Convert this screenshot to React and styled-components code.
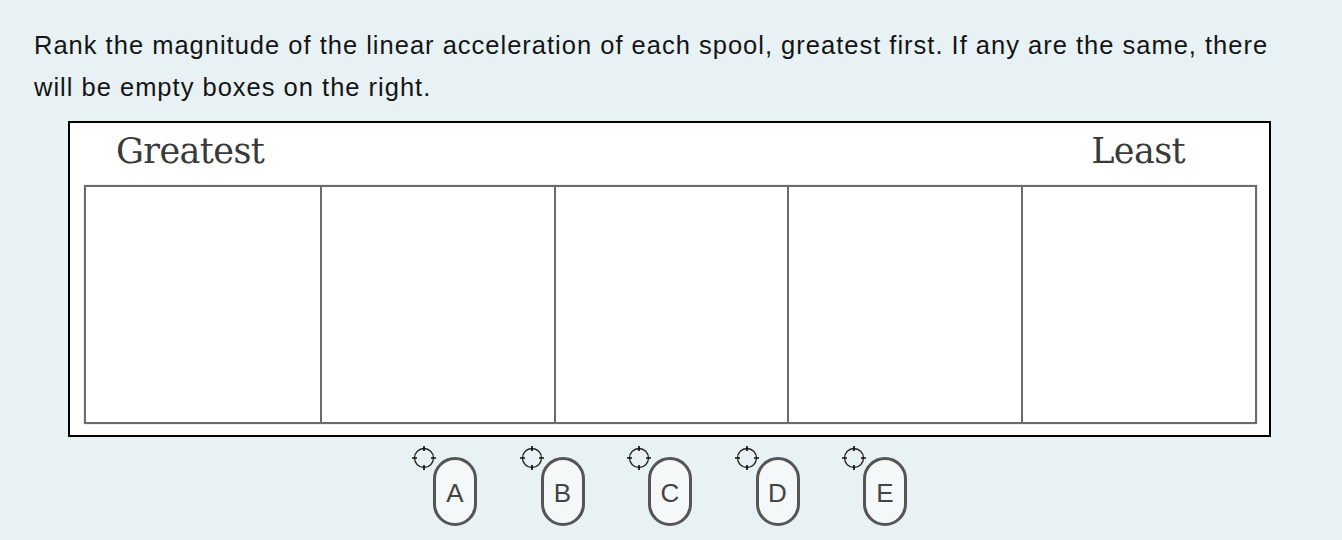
import React from "react";
import styled, { createGlobalStyle } from "styled-components";

const Global = createGlobalStyle`
  html, body { margin: 0; padding: 0; background: #e8f1f4; }
  body { font-family: "Liberation Sans", Arial, Helvetica, sans-serif; }
`;

const Page = styled.div`
  width: 1342px;
  height: 540px;
  box-sizing: border-box;
  padding: 24px 0 0 34px;
  background: #e8f1f4;
  overflow: hidden;
`;

const Prompt = styled.p`
  margin: 0;
  width: 1250px;
  font-size: 25.5px;
  letter-spacing: 1px;
  line-height: 42px;
  color: #151515;
`;

const Frame = styled.div`
  margin: 13px 0 0 34px;
  width: 1203px;
  height: 316px;
  box-sizing: border-box;
  border: 2px solid #000;
  background: #fff;
  display: flex;
  flex-direction: column;
  padding: 0 12px 11px 14px;
`;

const Headers = styled.div`
  display: flex;
  justify-content: space-between;
  height: 55px;
  padding: 7px 72px 0 32px;
  font-family: "DejaVu Serif", "Liberation Serif", serif;
  font-size: 35px;
  color: #3a3a3a;
  letter-spacing: -0.6px;
`;

const Header = styled.span`
  line-height: 42px;
`;

const Slots = styled.div`
  flex: 1;
  display: grid;
  grid-template-columns: repeat(5, 1fr);
  border: 2.5px solid #6b6b6b;
  box-shadow: 0 0 1px #999;
`;

const Slot = styled.div`
  border-left: ${(p) => (p.$first ? "none" : "2px solid #6b6b6b")};
`;

const Tokens = styled.div`
  display: flex;
  gap: 63.5px;
  margin: 7px 0 0 399px;
`;

const Token = styled.div`
  position: relative;
  width: 44px;
  height: 69px;
  margin-top: 13px;
`;

const Pill = styled.div`
  width: 44px;
  height: 69px;
  box-sizing: border-box;
  border: 3px solid #555;
  border-radius: 22px;
  background: #f4f8f9;
  display: flex;
  align-items: center;
  justify-content: center;
  font-size: 26px;
  color: #444;
  padding-top: 3px;
`;

const Handle = styled.svg`
  position: absolute;
  left: -22px;
  top: -12px;
  width: 26px;
  height: 26px;
`;

const Crosshair = () => (
  <Handle viewBox="0 0 26 26">
    <circle cx="13" cy="13" r="9.5" fill="none" stroke="#222" strokeWidth="1.3" />
    <path d="M13 1v5M13 20v5M1 13h5M20 13h5" stroke="#111" strokeWidth="1.7" />
  </Handle>
);

export default function App() {
  const letters = ["A", "B", "C", "D", "E"];
  return (
    <>
      <Global />
      <Page>
        <Prompt>
          Rank the magnitude of the linear acceleration of each spool, greatest first. If any are the same, there will be empty boxes on the right.
        </Prompt>
        <Frame>
          <Headers>
            <Header>Greatest</Header>
            <Header>Least</Header>
          </Headers>
          <Slots>
            {letters.map((l, i) => (
              <Slot key={l} $first={i === 0} />
            ))}
          </Slots>
        </Frame>
        <Tokens>
          {letters.map((l) => (
            <Token key={l}>
              <Crosshair />
              <Pill>{l}</Pill>
            </Token>
          ))}
        </Tokens>
      </Page>
    </>
  );
}
